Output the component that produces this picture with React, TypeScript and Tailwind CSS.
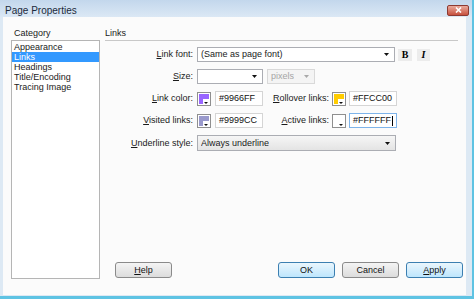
const font = { fontFamily: '"Liberation Sans", Arial, sans-serif' };

const categories = ["Appearance", "Links", "Headings", "Title/Encoding", "Tracing Image"];

function Arrow({ disabled = false }: { disabled?: boolean }) {
  return (
    <svg width="5" height="3" viewBox="0 0 5 3" className="shrink-0">
      <path d="M0 0h5L2.5 3z" fill={disabled ? "#a8a8a8" : "#111"} />
    </svg>
  );
}

function Select({ value, className, disabled = false }: { value: string; className: string; disabled?: boolean }) {
  return (
    <div
      className={`flex items-center justify-between border pl-[3px] pr-[5px] ${
        disabled ? "border-[#d9d9d9] bg-[#f4f4f4] text-[#a5a5a5]" : "border-[#abadb3] bg-white text-[#1a1a1a]"
      } ${className}`}
    >
      <span className="truncate">{value}</span>
      <Arrow disabled={disabled} />
    </div>
  );
}

function Swatch({ color }: { color: string }) {
  return (
    <div className="relative h-[14px] w-[14px] shrink-0 border border-[#8f8f8f] bg-white p-px">
      <div className="h-full w-full" style={{ backgroundColor: color }} />
      <div className="absolute bottom-px right-px flex h-[5px] w-[6px] items-end justify-center bg-white">
        <svg width="4" height="2" viewBox="0 0 4 2">
          <path d="M0 0h4L2 2z" fill="#111" />
        </svg>
      </div>
    </div>
  );
}

function HexInput({ value, focused = false }: { value: string; focused?: boolean }) {
  return (
    <div
      className={`flex h-[15px] w-[48px] items-center border bg-white pl-[3px] text-[#111] ${
        focused ? "border-[#7eb4ea]" : "border-[#d5d5d5]"
      }`}
    >
      {value}
      {focused && <span className="ml-px h-[10px] w-px bg-black" />}
    </div>
  );
}

function Label({ children }: { children: React.ReactNode }) {
  return <div className="text-right text-[#1a1a1a]">{children}</div>;
}

function Btn({ children, blue = false }: { children: React.ReactNode; blue?: boolean }) {
  return (
    <div
      className={`flex h-[16px] w-[57px] items-center justify-center rounded-[3px] border text-[#111] ${
        blue
          ? "border-[#3c7fb1] bg-gradient-to-b from-[#eaf6fd] to-[#bee6fd]"
          : "border-[#8a8a8a] bg-gradient-to-b from-[#f4f4f4] to-[#dcdcdc]"
      }`}
    >
      {children}
    </div>
  );
}

export default function App() {
  return (
    <div className="flex h-[299px] w-[474px] text-[9px] leading-[11px]" style={font}>
      <div className="flex w-[472px] flex-col">
        <div className="flex h-[17px] items-center justify-between bg-gradient-to-b from-[#c3d7ec] to-[#dbe8f5] pl-[5px] pr-[3px]">
          <span className="pt-[3px] text-[10px] text-[#1b2a3c]">Page Properties</span>
          <div className="mt-[3px] flex h-[11px] w-[22px] items-center justify-center rounded-[2px] border border-[#8d3a32] bg-gradient-to-b from-[#e9a99c] to-[#c7503e]">
            <svg width="7" height="6" viewBox="0 0 7 6">
              <path d="M1 0.5l5 5M6 0.5l-5 5" stroke="#fff" strokeWidth="1.6" />
            </svg>
          </div>
        </div>
        <div className="flex flex-1 bg-[#dde9f4] pb-px pl-[3px] pr-[6px]">
          <div className="flex flex-1 bg-[#fbfbfb] pl-[8px] pr-[3px] pt-[9px]">
            <div className="flex w-[89px] flex-col">
              <div className="h-[14px] pl-[3px] leading-[14px] text-[#1a1a1a]">Category</div>
              <div className="h-[239px] border border-[#b5b5b5] bg-white pt-px">
                {categories.map((c) => (
                  <div
                    key={c}
                    className={`h-[10px] pl-[2px] leading-[10px] ${
                      c === "Links" ? "bg-[#3399ff] text-white" : "text-[#1a1a1a]"
                    }`}
                  >
                    {c}
                  </div>
                ))}
              </div>
            </div>
            <div className="ml-[5px] flex h-[253px] w-[358px] flex-col">
              <div className="mr-[5px] h-[15px] border-b border-[#c8c8c8] leading-[14px] text-[#1a1a1a]">Links</div>
              <div className="mt-[6px] grid grid-cols-[88px_1fr] items-center gap-x-[4px] gap-y-[7px]">
                <Label>
                  <u>L</u>ink font:
                </Label>
                <div className="flex h-[15px] items-center">
                  <Select value="(Same as page font)" className="h-[15px] w-[198px]" />
                  <div
                    className="ml-[3px] flex h-[12px] w-[14px] items-center justify-center bg-[#ececec] text-[10px] font-bold"
                    style={{ fontFamily: '"Liberation Serif", serif' }}
                  >
                    B
                  </div>
                  <div
                    className="ml-[5px] flex h-[12px] w-[13px] items-center justify-center bg-[#ececec] text-[10px] font-bold italic"
                    style={{ fontFamily: '"Liberation Serif", serif' }}
                  >
                    I
                  </div>
                </div>
                <Label>
                  <u>S</u>ize:
                </Label>
                <div className="flex h-[15px] items-center">
                  <Select value="" className="h-[15px] w-[66px]" />
                  <Select value="pixels" disabled className="ml-[4px] h-[15px] w-[48px]" />
                </div>
                <Label>
                  <u>L</u>ink color:
                </Label>
                <div className="flex h-[15px] items-center">
                  <Swatch color="#9966FF" />
                  <div className="ml-[4px]">
                    <HexInput value="#9966FF" />
                  </div>
                  <div className="w-[66px] text-right text-[#1a1a1a]">
                    <u>R</u>ollover links:
                  </div>
                  <div className="ml-[3px]">
                    <Swatch color="#FFCC00" />
                  </div>
                  <div className="ml-[3px]">
                    <HexInput value="#FFCC00" />
                  </div>
                </div>
                <Label>
                  <u>V</u>isited links:
                </Label>
                <div className="flex h-[15px] items-center">
                  <Swatch color="#9999CC" />
                  <div className="ml-[4px]">
                    <HexInput value="#9999CC" />
                  </div>
                  <div className="w-[66px] text-right text-[#1a1a1a]">
                    <u>A</u>ctive links:
                  </div>
                  <div className="ml-[3px]">
                    <Swatch color="#FFFFFF" />
                  </div>
                  <div className="ml-[3px]">
                    <HexInput value="#FFFFFF" focused />
                  </div>
                </div>
                <Label>
                  <u>U</u>nderline style:
                </Label>
                <div className="flex h-[16px] items-center">
                  <Select value="Always underline" className="h-[16px] w-[199px] bg-gradient-to-b from-[#f6f6f6] to-[#e4e4e4]" />
                </div>
              </div>
              <div className="mb-px mt-auto flex items-center">
                <div className="ml-[10px]">
                  <Btn>
                    <u>H</u>elp
                  </Btn>
                </div>
                <div className="ml-auto flex gap-[7px]">
                  <Btn blue>OK</Btn>
                  <Btn>Cancel</Btn>
                  <Btn blue>
                    <u>A</u>pply
                  </Btn>
                </div>
              </div>
            </div>
          </div>
        </div>
        <div className="h-[3px] bg-[#5ec3e3]" />
      </div>
      <div className="w-[2px] bg-[#5ec3e3]" />
    </div>
  );
}
